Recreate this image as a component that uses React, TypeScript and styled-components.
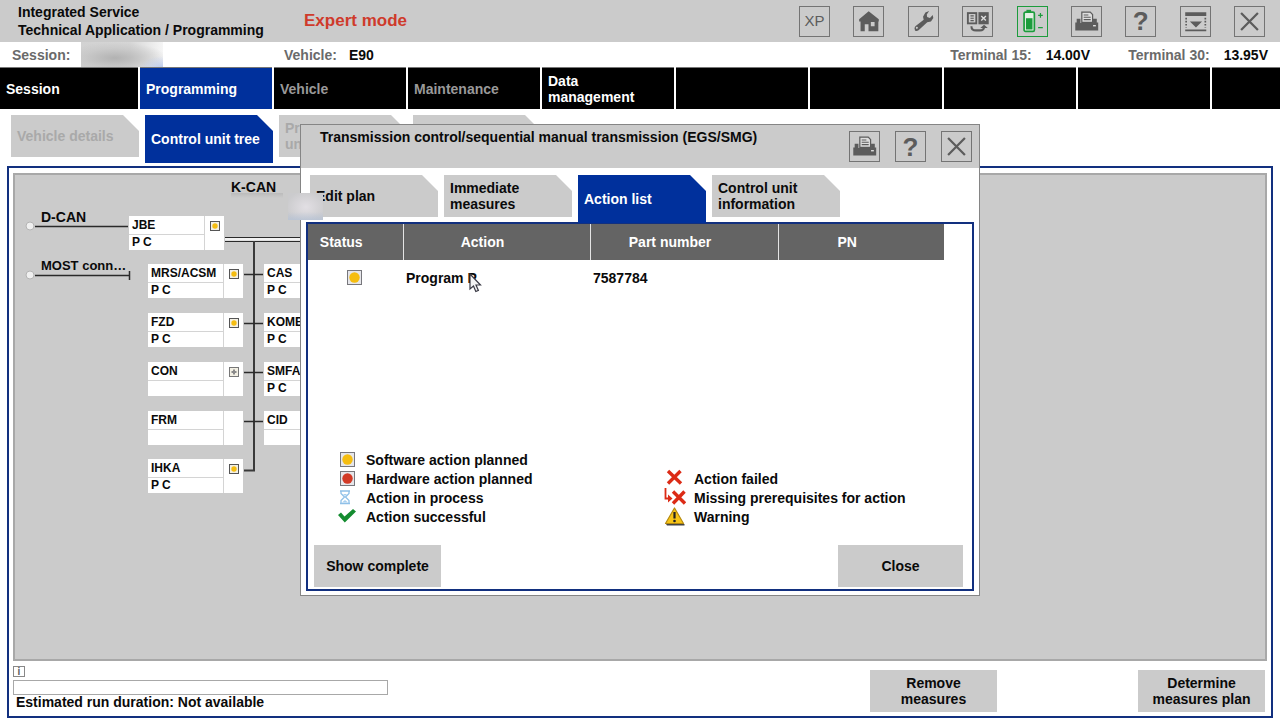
import React from "react";
import styled, { createGlobalStyle, css } from "styled-components";

const BLUE = "#00309c";
const NAVY = "#12307f";
const GREY = "#cbcbcb";
const INK = "#5c5c5c";
const GREEN = "#1c9c3c";

const GlobalStyle = createGlobalStyle`
  *, *::before, *::after { box-sizing: border-box; }
  body { margin: 0; background: #fff; }
  body, button, table {
    font-family: "Liberation Sans", Arial, sans-serif;
    font-size: 14px;
    font-weight: 700;
    line-height: 16px;
    color: #0a0a0a;
  }
  button { border: 0; padding: 0; margin: 0; background: none; cursor: pointer; }
  h1, h2, dl, dd, ul { margin: 0; padding: 0; font-size: inherit; font-weight: inherit; }
  ul { list-style: none; }
  svg { display: block; }
`;

const Page = styled.div`
  min-height: 100vh;
  display: flex;
  flex-direction: column;
  padding-bottom: 2px;
`;

const TopBar = styled.header`
  display: flex;
  align-items: center;
  height: 42px;
  padding: 0 15px 0 18px;
  background: ${GREY};
`;

const AppTitle = styled.h1`
  width: 286px;
  line-height: 18px;
`;

const Mode = styled.div`
  flex: 1;
  font-size: 17px;
  line-height: 20px;
  color: #cf3a2b;
`;

const Toolbar = styled.div`
  display: flex;
  justify-content: space-between;
  width: 466px;
`;

const ToolButton = styled.button<{ $green?: boolean }>`
  display: grid;
  place-items: center;
  width: 31px;
  height: 31px;
  border: 1px solid ${(p) => (p.$green ? GREEN : "#747474")};
  color: ${(p) => (p.$green ? GREEN : INK)};
`;

const XpLabel = styled.span`
  font-size: 15px;
  font-weight: 400;
`;

const HelpMark = styled.span`
  font-size: 26px;
  line-height: 28px;
`;

const InfoBar = styled.div`
  display: flex;
  align-items: center;
  height: 25px;
  padding: 0 12px;
`;

const Field = styled.dl<{ $width?: number; $gap: number }>`
  display: flex;
  align-items: center;
  gap: ${(p) => p.$gap}px;
  ${(p) => p.$width && css`width: ${p.$width}px;`}
  dt { color: #6a6a6a; }
`;

const Spacer = styled.div`
  flex: 1;
`;

const Redacted = styled.dd`
  width: 82px;
  height: 25px;
  background:
    radial-gradient(ellipse 24px 12px at 82px 26px, #b9c8ea, transparent),
    radial-gradient(ellipse 52px 16px at 34px 16px, #b2b2b2, rgba(195, 195, 195, 0.6) 60%, transparent),
    linear-gradient(90deg, #d2d2d2, #d6d6d6 60%, #f6f6f6);
`;

const MainNav = styled.nav`
  display: grid;
  grid-template-columns: 138fr repeat(8, 132fr) 68fr;
  gap: 2px;
  height: 42px;
`;

const navCell = css`
  background: #000;
  border-top: 1px solid #777;
`;

const NavButton = styled.button<{ $active?: boolean }>`
  ${navCell}
  padding: 0 32px 0 6px;
  text-align: left;
  color: #fff;
  ${(p) => p.$active && css`background: ${BLUE};`}
  &:disabled { color: #999; }
`;

const NavBlank = styled.div`
  ${navCell}
`;

const TabRow = styled.div`
  display: flex;
  align-items: flex-start;
  gap: 6px;
  height: 47px;
`;

const PageTabs = styled(TabRow)`
  margin: 6px 0 4px;
  padding-left: 11px;
`;

const Tab = styled.button<{ $active?: boolean }>`
  width: 128px;
  height: ${(p) => (p.$active ? 48 : 42)}px;
  padding: 0 20px 0 6px;
  text-align: left;
  background: ${(p) => (p.$active ? BLUE : GREY)};
  color: ${(p) => (p.$active ? "#fff" : "#0a0a0a")};
  clip-path: polygon(0 0, calc(100% - 16px) 0, 100% 16px, 100% 100%, 0 100%);
  white-space: ${(p) => (p.$active ? "nowrap" : "normal")};
  &:disabled { color: #a9a9a9; padding-right: 12px; }
`;

const Workspace = styled.main`
  flex: 1;
  display: flex;
  flex-direction: column;
  margin: 0 7px;
  padding: 5px 4px 4px;
  border: 2px solid ${NAVY};
`;

const Canvas = styled.section`
  position: relative;
  flex: 1;
  min-height: 340px;
  overflow: hidden;
  background: ${GREY};
  border: 2px solid #a8a8a8;
`;

const Wires = styled.svg`
  position: absolute;
  left: 0;
  top: 0;
`;

const BusLabel = styled.div<{ $x: number; $y: number; $small?: boolean }>`
  position: absolute;
  left: ${(p) => p.$x}px;
  top: ${(p) => p.$y}px;
  ${(p) => p.$small && css`font-size: 13px;`}
`;

const Smudge = styled.div`
  position: absolute;
  left: 216px;
  top: 18px;
  width: 52px;
  height: 5px;
  background: linear-gradient(180deg, rgba(150, 150, 150, 0.3), transparent);
`;

const NodeBox = styled.div<{ $x: number; $y: number }>`
  position: absolute;
  left: ${(p) => p.$x}px;
  top: ${(p) => p.$y}px;
  display: grid;
  grid-template-columns: 75px 19px;
  grid-template-rows: 18px 15px;
  gap: 1px;
  background: #d4d4d4;
  font-size: 12px;
  line-height: 18px;
`;

const NodeName = styled.div`
  padding-left: 3px;
  background: #fff;
`;

const NodeCodes = styled.div`
  padding-left: 3px;
  line-height: 14px;
  background: #fff;
`;

const NodeState = styled.div`
  grid-column: 2;
  grid-row: 1 / span 2;
  display: flex;
  justify-content: center;
  padding-top: 5px;
  background: #fff;
`;

const Footer = styled.footer`
  display: flex;
  align-items: flex-start;
  padding: 5px 2px 0 0;
`;

const RunInfo = styled.div`
  flex: 1;
`;

const InfoBadge = styled.div`
  width: 12px;
  height: 11px;
  border: 1px solid #888;
  font-size: 10px;
  line-height: 9px;
  text-align: center;
  color: ${INK};
`;

const Progress = styled.div`
  max-width: 375px;
  height: 15px;
  margin: 3px 0 0;
  border: 1px solid #a8a8a8;
`;

const Duration = styled.p`
  margin: 0 0 0 3px;
  line-height: 14px;
`;

const PushButton = styled.button<{ $width: number }>`
  width: ${(p) => p.$width}px;
  height: 42px;
  background: ${GREY};
`;

const FooterButtons = styled.div`
  display: flex;
  gap: 141px;
  padding-top: 4px;
`;

const Overlay = styled.div`
  position: fixed;
  inset: 0;
  display: grid;
  place-items: center;
`;

const Dialog = styled.section`
  position: relative;
  display: flex;
  flex-direction: column;
  width: 680px;
  min-height: 472px;
  padding-bottom: 4px;
  background: #fff;
  border: 1px solid #858585;
`;

const DialogHeader = styled.header`
  display: flex;
  justify-content: space-between;
  align-items: flex-start;
  height: 43px;
  padding: 6px 7px 0 19px;
  background: ${GREY};
`;

const DialogTitle = styled.h2`
  line-height: 12px;
`;

const DialogTools = styled.div`
  display: flex;
  gap: 15px;
`;

const DialogTabs = styled(TabRow)`
  margin-top: 7px;
  padding-left: 9px;
`;

const DialogBody = styled.div`
  flex: 1;
  display: flex;
  flex-direction: column;
  margin: 0 5px;
  padding-bottom: 2px;
  border: 2px solid ${NAVY};
`;

const ActionTable = styled.table`
  width: calc(100% - 28px);
  border-collapse: collapse;
  table-layout: fixed;
`;

const HeadCell = styled.th<{ $width?: number }>`
  width: ${(p) => (p.$width ? `${p.$width}px` : "auto")};
  height: 36px;
  padding: 0 28px 0 0;
  background: #646464;
  color: #fff;
  & + & { border-left: 1px solid #e4e4e4; }
`;

const Cell = styled.td`
  height: 36px;
  padding: 0 0 0 3px;
`;

const StatusCell = styled(Cell)`
  padding: 0 2px 2px 0;
  svg { margin: 0 auto; }
`;

const Legend = styled.div`
  display: grid;
  grid-template-columns: 328px 1fr;
  align-items: end;
  margin-top: auto;
  padding: 0 0 19px 28px;
`;

const LegendItem = styled.li`
  display: flex;
  align-items: center;
  height: 19px;
  gap: 8px;
`;

const LegendIcon = styled.span`
  display: grid;
  place-items: center;
  width: 22px;
`;

const DialogButtons = styled.div`
  display: flex;
  justify-content: space-between;
  padding: 0 9px 0 6px;
`;

const Pointer = styled.svg`
  position: absolute;
  left: 168px;
  top: 148px;
`;

const DragGhost = styled.div`
  position: absolute;
  left: -13px;
  top: 68px;
  width: 35px;
  height: 27px;
  background:
    linear-gradient(0deg, rgba(176, 192, 216, 0.6), transparent 30%),
    radial-gradient(ellipse 20px 16px at 18px 14px, #e2dfe4, #cbcbcd);
`;

/* ---------- icons ---------- */

const HouseIcon = () => (
  <svg width="29" height="29" viewBox="0 0 31 31" fill="currentColor" aria-hidden="true">
    <path
      fillRule="evenodd"
      d="M15.7 4.5 5.5 13v2.5H7V26h4.5v-7.5h4V26H26V15.5h.5V13zM18 16h4v4.500h-4z"
    />
  </svg>
);

const WrenchIcon = () => (
  <svg width="29" height="29" viewBox="0 0 31 31" fill="currentColor" aria-hidden="true">
    <path
      fillRule="evenodd"
      d="M15 10.500 17.500 6l4-1.800L19 8l.4 2.800 3 1L25.300 8.500l.7 3.300-2.500 3.700-4 .7-9.300 8.600q-2 1.500-3.800.2-1.700-2.200.4-4.500l8.900-7zM7.300 22.300a1.100 1.100 0 1 0 2.200 0 1.100 1.100 0 1 0-2.200 0z"
    />
  </svg>
);

const TransferIcon = () => (
  <svg width="29" height="29" viewBox="0 0 31 31" fill="none" stroke="currentColor" aria-hidden="true">
    <rect x="5.200" y="6.500" width="9" height="11" strokeWidth="2" />
    <path d="M8 9.500h3.500M8 12h3.500M8 14.500h3.500" strokeWidth="1.200" />
    <rect x="16.500" y="5.500" width="11" height="13" fill="currentColor" stroke="none" />
    <path d="M19.500 9.500l5 5M24.500 9.500l-5 5" stroke="#ddd" strokeWidth="1.500" />
    <path d="M9 20.500q0 4.500 5 4.500h4q4.500 0 4.500-4" strokeWidth="2.200" />
    <path d="M18.500 22.500 22.500 19l4 3.500z" fill="currentColor" stroke="none" />
  </svg>
);

const BatteryIcon = () => (
  <svg width="29" height="29" viewBox="0 0 31 31" fill="currentColor" aria-hidden="true">
    <path d="M9 3h5v3H9z" />
    <rect x="6.500" y="5.500" width="11" height="20.500" rx="1.500" fill="#e4f0e4" stroke="currentColor" strokeWidth="1.800" />
    <rect x="8.500" y="12" width="7" height="12" />
    <path d="M21.500 9h5M24 6.500v5M21.500 22h5" stroke="currentColor" strokeWidth="1.300" />
  </svg>
);

const PrinterIcon = () => (
  <svg width="29" height="29" viewBox="0 0 31 31" fill="currentColor" aria-hidden="true">
    <path d="M3.500 16.500H5v-4h4v4.500h13.500v-4.500h4v4H28v8.500H3.500z" />
    <path d="M10.500 16.500V5.500h9l2.500 2.500v8.500z" fill="#dedede" stroke="currentColor" strokeWidth="1.300" />
    <path d="M12.500 8.500h5M12.500 11h7.500M12.500 13.500h7.500" stroke="currentColor" strokeWidth="1.100" />
    <path d="M22.500 20h3" stroke="#ddd" strokeWidth="1.500" />
  </svg>
);

const CollapseIcon = () => (
  <svg width="29" height="29" viewBox="0 0 31 31" fill="currentColor" aria-hidden="true">
    <path d="M4.500 5.500h22.500v4H4.500zM4.500 24h22.500v2H4.500zM9.500 15.500h13l-6.500 6.500z" />
    <path d="M5.500 11.500v10.500M26 11.500v10.500" stroke="currentColor" strokeWidth="1.800" strokeDasharray="1.800 1.500" />
  </svg>
);

const CrossIcon = () => (
  <svg width="29" height="29" viewBox="0 0 31 31" stroke="currentColor" strokeWidth="2.400" aria-hidden="true">
    <path d="M6.500 6.500l18 18M24.500 6.500l-18 18" />
  </svg>
);

type Tone = "yellow" | "grey" | "red";
const TONES: Record<Tone, string> = { yellow: "#f5bd10", grey: "#8a8a8a", red: "#d23a26" };

const NodeMark = ({ tone }: { tone: Tone }) => (
  <svg width="10" height="10" aria-hidden="true">
    <rect x="0.500" y="0.500" width="9" height="9" fill="#f3f0e4" stroke={tone === "grey" ? "#777" : "#555"} />
    {tone === "grey" ? (
      <path d="M5 2.500v5M2.500 5h5" stroke={TONES.grey} strokeWidth="2" />
    ) : (
      <circle cx="5" cy="5" r="2.700" fill={TONES[tone]} />
    )}
  </svg>
);

const StatusMark = ({ tone }: { tone: Tone }) => (
  <svg width="15" height="15" aria-hidden="true">
    <rect x="0.500" y="0.500" width="14" height="14" fill="#e6e6ea" stroke="#77777c" />
    <circle cx="7.500" cy="7.500" r="5.200" fill={TONES[tone]} />
  </svg>
);

const HourglassIcon = () => (
  <svg width="20" height="15" viewBox="0 0 20 15" fill="none" stroke="#8fc0e8" aria-hidden="true">
    <path d="M3 1h10M3 13.500h10M4 1v2.500L7.500 7 4 10.500v3M12 1v2.500L8.500 7l3.500 3.500v3" strokeWidth="1.300" />
    <path d="M5 12.500h6L8 10zM6 4h4L8 6z" fill="#a8d0f0" stroke="none" />
  </svg>
);

const TickIcon = () => (
  <svg width="20" height="16" viewBox="0 0 20 16" fill="#148c30" aria-hidden="true">
    <path d="M1 6 4 3.500l3.500 4L16 0l3 2.500L7.800 13.500z" />
  </svg>
);

const FailedIcon = () => (
  <svg width="22" height="19" viewBox="0 0 22 19" stroke="#dc2b16" strokeWidth="3.400" aria-hidden="true">
    <path d="M4 2l13 12.500M16.500 2 4 14.500" />
  </svg>
);

const MissingIcon = () => (
  <svg width="22" height="19" viewBox="0 0 22 19" stroke="#dc2b16" fill="none" aria-hidden="true">
    <path d="M9 3.500l12 12M20.500 3.500 9 15.500" strokeWidth="3.400" />
    <path d="M1.500 0v10.500H5" strokeWidth="1.800" />
    <path d="M4 6.500 8.500 10.500 4 14.500z" fill="#dc2b16" stroke="none" />
  </svg>
);

const WarningIcon = () => (
  <svg width="22" height="19" viewBox="0 0 22 19" aria-hidden="true">
    <path d="M2 17h18.500v1.500H3z" fill="#444" />
    <path d="M10.500 1 19.500 16.500h-18z" fill="#f7c416" stroke="#b58a10" strokeWidth="1.200" strokeLinejoin="round" />
    <path d="M10.500 5v6.500" stroke="#222" strokeWidth="2.200" />
    <circle cx="10.500" cy="14" r="1.300" fill="#222" />
  </svg>
);

/* ---------- data ---------- */

interface UnitNode {
  name: string;
  codes?: string;
  x: number;
  y: number;
  tone?: Tone;
}

const NODES: UnitNode[] = [
  { name: "JBE", codes: "P C", x: 114, y: 41, tone: "yellow" },
  { name: "MRS/ACSM", codes: "P C", x: 133, y: 89, tone: "yellow" },
  { name: "FZD", codes: "P C", x: 133, y: 138, tone: "yellow" },
  { name: "CON", x: 133, y: 187, tone: "grey" },
  { name: "FRM", x: 133, y: 236 },
  { name: "IHKA", codes: "P C", x: 133, y: 284, tone: "yellow" },
  { name: "CAS", codes: "P C", x: 249, y: 89 },
  { name: "KOMBI", codes: "P C", x: 249, y: 138 },
  { name: "SMFA", codes: "P C", x: 249, y: 187 },
  { name: "CID", x: 249, y: 236 },
];

export default function App() {
  return (
    <>
      <GlobalStyle />
      <Page>
        <TopBar>
          <AppTitle>
            Integrated Service
            <br />
            Technical Application / Programming
          </AppTitle>
          <Mode>Expert mode</Mode>
          <Toolbar>
            <ToolButton><XpLabel>XP</XpLabel></ToolButton>
            <ToolButton aria-label="Home"><HouseIcon /></ToolButton>
            <ToolButton aria-label="Settings"><WrenchIcon /></ToolButton>
            <ToolButton aria-label="Transfer"><TransferIcon /></ToolButton>
            <ToolButton aria-label="Battery" $green><BatteryIcon /></ToolButton>
            <ToolButton aria-label="Print"><PrinterIcon /></ToolButton>
            <ToolButton><HelpMark>?</HelpMark></ToolButton>
            <ToolButton aria-label="Minimize"><CollapseIcon /></ToolButton>
            <ToolButton aria-label="Exit"><CrossIcon /></ToolButton>
          </Toolbar>
        </TopBar>

        <InfoBar>
          <Field $width={272} $gap={11}>
            <dt>Session:</dt>
            <Redacted />
          </Field>
          <Field $gap={12}>
            <dt>Vehicle:</dt>
            <dd>E90</dd>
          </Field>
          <Spacer />
          <Field $width={178} $gap={14}>
            <dt>Terminal 15:</dt>
            <dd>14.00V</dd>
          </Field>
          <Field $gap={14}>
            <dt>Terminal 30:</dt>
            <dd>13.95V</dd>
          </Field>
        </InfoBar>

        <MainNav>
          <NavButton>Session</NavButton>
          <NavButton $active>Programming</NavButton>
          <NavButton disabled>Vehicle</NavButton>
          <NavButton disabled>Maintenance</NavButton>
          <NavButton>Data management</NavButton>
          <NavBlank />
          <NavBlank />
          <NavBlank />
          <NavBlank />
          <NavBlank />
        </MainNav>

        <PageTabs>
          <Tab disabled>Vehicle details</Tab>
          <Tab $active>Control unit tree</Tab>
          <Tab disabled>
            Pre
            <br />
            unit
          </Tab>
          <Tab disabled />
        </PageTabs>

        <Workspace>
          <Canvas>
            <Wires width="300" height="310" fill="none" stroke="#2a2a2a" strokeWidth="1">
              <path d="M20 51.500h93M20 100.500h94M114.500 96v9" strokeWidth="1.500" />
              <path d="M210 64h90" stroke="#f2f2f2" strokeWidth="3" />
              <path d="M210 62.500h90M210 66.500h90" />
              <path d="M239 66v229.500h-10" strokeWidth="2" stroke="#3a3a3a" />
              <path d="M229 99.500h19M229 148.500h19M229 197.500h19M229 246.500h19" strokeWidth="1.500" />
              <circle cx="15" cy="51" r="4" fill="#f0f0f0" stroke="#b4b4b4" />
              <circle cx="15" cy="100" r="4" fill="#f0f0f0" stroke="#b4b4b4" />
            </Wires>
            <Smudge />
            <BusLabel $x={216} $y={4}>K-CAN</BusLabel>
            <BusLabel $x={26} $y={34}>D-CAN</BusLabel>
            <BusLabel $x={26} $y={83} $small>MOST conn…</BusLabel>
            {NODES.map((n) => (
              <NodeBox key={n.name} $x={n.x} $y={n.y}>
                <NodeName>{n.name}</NodeName>
                <NodeCodes>{n.codes}</NodeCodes>
                <NodeState>{n.tone && <NodeMark tone={n.tone} />}</NodeState>
              </NodeBox>
            ))}
          </Canvas>

          <Footer>
            <RunInfo>
              <InfoBadge>i</InfoBadge>
              <Progress role="progressbar" aria-label="Run progress" />
              <Duration>Estimated run duration: Not available</Duration>
            </RunInfo>
            <FooterButtons>
              <PushButton $width={127}>
                Remove
                <br />
                measures
              </PushButton>
              <PushButton $width={127}>
                Determine
                <br />
                measures plan
              </PushButton>
            </FooterButtons>
          </Footer>
        </Workspace>
      </Page>

      <Overlay>
        <Dialog role="dialog" aria-labelledby="dialog-title">
          <DialogHeader>
            <DialogTitle id="dialog-title">
              Transmission control/sequential manual transmission (EGS/SMG)
            </DialogTitle>
            <DialogTools>
              <ToolButton aria-label="Print"><PrinterIcon /></ToolButton>
              <ToolButton><HelpMark>?</HelpMark></ToolButton>
              <ToolButton aria-label="Close dialog"><CrossIcon /></ToolButton>
            </DialogTools>
          </DialogHeader>

          <DialogTabs>
            <Tab>Edit plan</Tab>
            <Tab>Immediate measures</Tab>
            <Tab $active>Action list</Tab>
            <Tab>Control unit information</Tab>
          </DialogTabs>

          <DialogBody>
            <ActionTable>
              <thead>
                <tr>
                  <HeadCell $width={95}>Status</HeadCell>
                  <HeadCell $width={187}>Action</HeadCell>
                  <HeadCell $width={188}>Part number</HeadCell>
                  <HeadCell>PN</HeadCell>
                </tr>
              </thead>
              <tbody>
                <tr>
                  <StatusCell><StatusMark tone="yellow" /></StatusCell>
                  <Cell>Program P</Cell>
                  <Cell>7587784</Cell>
                  <Cell />
                </tr>
              </tbody>
            </ActionTable>

            <Legend>
              <ul>
                <LegendItem><LegendIcon><StatusMark tone="yellow" /></LegendIcon>Software action planned</LegendItem>
                <LegendItem><LegendIcon><StatusMark tone="red" /></LegendIcon>Hardware action planned</LegendItem>
                <LegendItem><LegendIcon><HourglassIcon /></LegendIcon>Action in process</LegendItem>
                <LegendItem><LegendIcon><TickIcon /></LegendIcon>Action successful</LegendItem>
              </ul>
              <ul>
                <LegendItem><LegendIcon><FailedIcon /></LegendIcon>Action failed</LegendItem>
                <LegendItem><LegendIcon><MissingIcon /></LegendIcon>Missing prerequisites for action</LegendItem>
                <LegendItem><LegendIcon><WarningIcon /></LegendIcon>Warning</LegendItem>
              </ul>
            </Legend>

            <DialogButtons>
              <PushButton $width={127}>Show complete</PushButton>
              <PushButton $width={125}>Close</PushButton>
            </DialogButtons>
          </DialogBody>

          <DragGhost />
          <Pointer width="14" height="22" viewBox="0 0 14 22" aria-hidden="true">
            <path
              d="M1 1v15l3.500-3 2.300 5.500 2.600-1.100L7 12h4.500z"
              fill="#f4f4f4"
              stroke="#3a3a44"
              strokeWidth="1.200"
            />
          </Pointer>
        </Dialog>
      </Overlay>
    </>
  );
}
